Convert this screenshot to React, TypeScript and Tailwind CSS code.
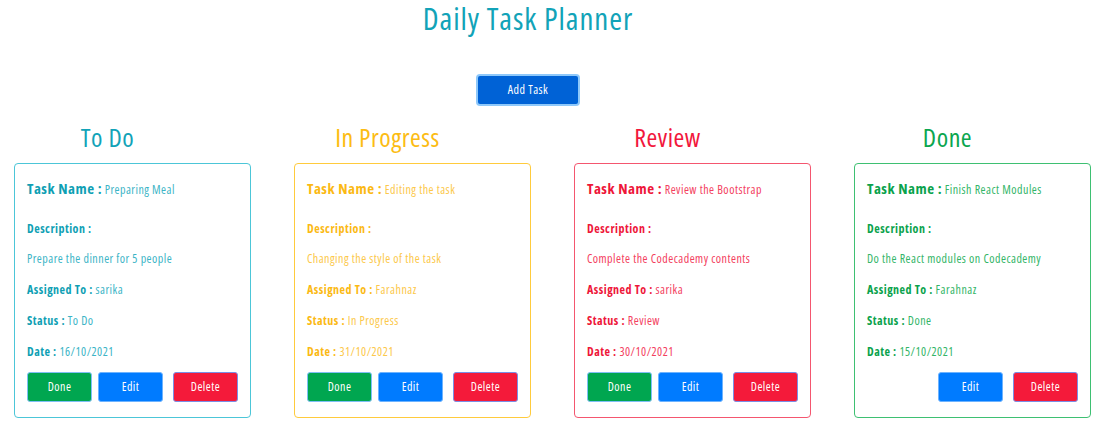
type Col = {
  title: string;
  head: string;
  border: string;
  label: string;
  value: string;
  task: string;
  desc: string;
  who: string;
  status: string;
  date: string;
  done: boolean;
};

const cols: Col[] = [
  {
    title: "To Do",
    head: "text-[#12a3b8]",
    border: "border-[#4cc6d8]",
    label: "text-[#0f9fb4]",
    value: "text-[#3bb4c6]",
    task: "Preparing Meal",
    desc: "Prepare the dinner for 5 people",
    who: "sarika",
    status: "To Do",
    date: "16/10/2021",
    done: true,
  },
  {
    title: "In Progress",
    head: "text-[#fcbc14]",
    border: "border-[#ffcb3d]",
    label: "text-[#fbb914]",
    value: "text-[#fcc84a]",
    task: "Editing the task",
    desc: "Changing the style of the task",
    who: "Farahnaz",
    status: "In Progress",
    date: "31/10/2021",
    done: true,
  },
  {
    title: "Review",
    head: "text-[#f2173c]",
    border: "border-[#f4566f]",
    label: "text-[#ee1639]",
    value: "text-[#f3405e]",
    task: "Review the Bootstrap",
    desc: "Complete the Codecademy contents",
    who: "sarika",
    status: "Review",
    date: "30/10/2021",
    done: true,
  },
  {
    title: "Done",
    head: "text-[#0ba64f]",
    border: "border-[#3ec072]",
    label: "text-[#0aa24c]",
    value: "text-[#33b567]",
    task: "Finish React Modules",
    desc: "Do the React modules on Codecademy",
    who: "Farahnaz",
    status: "Done",
    date: "15/10/2021",
    done: false,
  },
];

function Row({ label, value, c }: { label: string; value?: string; c: Col }) {
  return (
    <div className="mt-[15px] text-[12px] leading-[16px]">
      <span className={`font-bold ${c.label}`}>{label}</span>
      {value !== undefined && <span className={c.value}> {value}</span>}
    </div>
  );
}

export default function App() {
  return (
    <div className="w-[1094px] h-[439px] bg-white font-['Open_Sans',sans-serif] [font-stretch:75%] tracking-[0.03em] overflow-hidden">
      <div className="w-[1056px] pt-[1px] flex flex-col items-center">
        <h1 className="text-[31px] leading-[40px] -mt-[3px] font-medium tracking-[0.03em] text-[#12a3b8]">Daily Task Planner</h1>
        <button className="mt-[36px] w-[104px] h-[32px] rounded-[4px] border-2 border-[#8ec8fa] bg-[#0062d6] text-white text-[12px]">
          Add Task
        </button>
      </div>
      <div className="flex pl-[14px] gap-[43px] mt-[15px]">
        {cols.map((c) => (
          <div key={c.title} className="w-[237px] shrink-0 flex flex-col">
            <div className={`pr-[50px] text-center text-[26px] leading-[32px] font-medium tracking-[0.02em] ${c.head}`}>{c.title}</div>
            <div className={`mt-[10px] h-[255px] border ${c.border} rounded-[4px] px-[12px] pt-[14px]`}>
              <div className="text-[15px] leading-[20px]">
                <span className={`font-bold ${c.label}`}>Task Name :</span>
                <span className={`text-[12px] ${c.value}`}> {c.task}</span>
              </div>
              <div className="mt-[21px] text-[12px] leading-[16px]">
                <span className={`font-bold ${c.label}`}>Description :</span>
              </div>
              <div className={`mt-[14px] text-[12px] leading-[16px] ${c.value}`}>{c.desc}</div>
              <Row label="Assigned To :" value={c.who} c={c} />
              <Row label="Status :" value={c.status} c={c} />
              <Row label="Date :" value={c.date} c={c} />
              <div className="mt-[12px] flex justify-end text-[12px] text-white">
                {c.done && (
                  <button className="w-[65px] h-[30px] mr-[6px] rounded-[3px] border border-[#7fbff5] bg-[#00a650]">Done</button>
                )}
                <button className="w-[65px] h-[30px] mr-[10px] rounded-[3px] border border-[#6db3ff] bg-[#007bff]">Edit</button>
                <button className="w-[65px] h-[30px] rounded-[3px] border border-[#7a8fe6] bg-[#f41a3a]">Delete</button>
              </div>
            </div>
          </div>
        ))}
      </div>
    </div>
  );
}
